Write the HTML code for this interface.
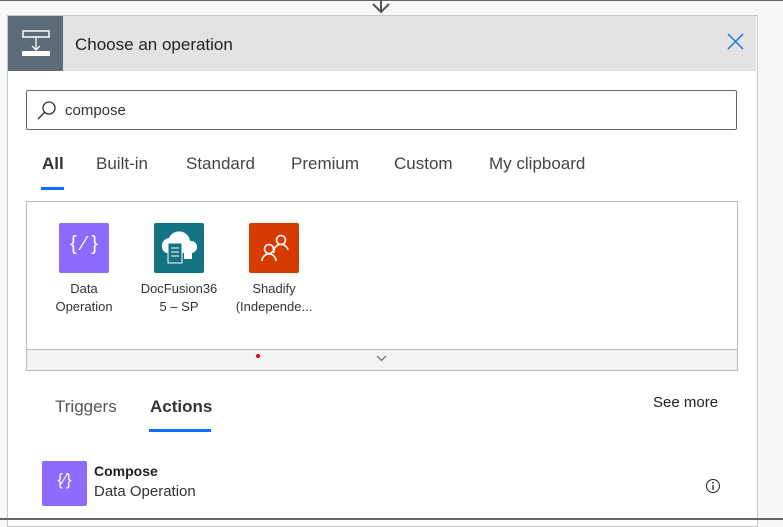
<!DOCTYPE html>
<html><head><style>
body{margin:0;width:783px;height:520px;background:#f8f8f8;font-family:"Liberation Sans",sans-serif;position:relative;overflow:hidden;color:#323130}
.a{position:absolute}
</style></head><body>
<div class="a" style="left:0;top:0;width:783px;height:1px;background:#666"></div>
<svg class="a" style="left:368px;top:0" width="26" height="14" viewBox="0 0 26 14"><path d="M13 0V12M5 4l8 8 8-8" stroke="#555" stroke-width="2" fill="none"/></svg>
<div class="a" style="left:7px;top:15px;width:749px;height:510px;background:#fff;border:1px solid #c8c8c8"></div>
<div class="a" style="left:8px;top:16px;width:748px;height:55px;background:#e3e3e3"></div>
<div class="a" style="left:8px;top:16px;width:55px;height:55px;background:#5e6b79"></div>
<svg class="a" style="left:20px;top:28px" width="32" height="32" viewBox="0 0 32 32"><rect x="3" y="3" width="26" height="6" fill="none" stroke="#fff" stroke-width="1.5"/><path d="M16 9v13M12 18l4 4 4-4" stroke="#fff" stroke-width="1.3" fill="none"/><rect x="2" y="23" width="28" height="5" fill="#fff"/></svg>
<div class="a" style="left:75px;top:35px;font-size:17px;color:#222">Choose an operation</div>
<svg class="a" style="left:727px;top:33px" width="17" height="17"><path d="M1 1L16 16M16 1L1 16" stroke="#1a73e8" stroke-width="1.5"/></svg>
<div class="a" style="left:26px;top:90px;width:709px;height:38px;border:1px solid #666;border-radius:2px"></div>
<svg class="a" style="left:36px;top:99px" width="22" height="22"><circle cx="13" cy="9" r="6" fill="none" stroke="#333" stroke-width="1.3"/><path d="M9 13L2 20" stroke="#333" stroke-width="1.4"/></svg>
<div class="a" style="left:65px;top:102px;font-size:15px;color:#333">compose</div>
<div class="a" style="left:42px;top:154px;font-size:17px;font-weight:bold;color:#333">All</div>
<div class="a" style="left:41px;top:187px;width:23px;height:3px;background:#0f6cff"></div>
<div class="a" style="left:96px;top:154px;font-size:17px;color:#444">Built-in</div>
<div class="a" style="left:186px;top:154px;font-size:17px;color:#444">Standard</div>
<div class="a" style="left:291px;top:154px;font-size:17px;color:#444">Premium</div>
<div class="a" style="left:394px;top:154px;font-size:17px;color:#444">Custom</div>
<div class="a" style="left:489px;top:154px;font-size:17px;color:#444">My clipboard</div>
<div class="a" style="left:26px;top:201px;width:710px;height:169px;border:1px solid #bbb;border-bottom:none"></div>
<div class="a" style="left:27px;top:349px;width:710px;height:20px;background:#f3f3f3;border-top:1px solid #bbb;border-bottom:1px solid #bbb"></div>
<div class="a" style="left:256px;top:354px;width:4px;height:4px;border-radius:50%;background:#e00"></div>
<svg class="a" style="left:376px;top:355px" width="11" height="7"><path d="M1 1l4.5 4.5L10 1" stroke="#555" fill="none"/></svg>
<div class="a" style="left:59px;top:223px;width:50px;height:50px;background:#8c6cff;border-radius:2px"></div>
<div class="a" style="left:59px;top:233px;width:50px;text-align:center;color:#fff;font-size:20px">{ ⁄ }</div>
<div class="a" style="left:154px;top:223px;width:50px;height:50px;background:#147383;border-radius:2px"></div>
<svg class="a" style="left:154px;top:223px" width="50" height="50"><path d="M12 30a8 8 0 0 1 3-15 11 11 0 0 1 21 3 6 6 0 0 1 2 12z" fill="#fff"/><rect x="14" y="20" width="14" height="20" fill="#147383" stroke="#fff"/><path d="M17 25h8M17 29h8M17 33h8" stroke="#fff"/><rect x="30" y="27" width="8" height="9" fill="#fff"/></svg>
<div class="a" style="left:249px;top:223px;width:50px;height:50px;background:#d83b01;border-radius:2px"></div>
<svg class="a" style="left:249px;top:223px" width="50" height="50"><circle cx="32" cy="17" r="4.5" fill="none" stroke="#fff" stroke-width="1.6"/><path d="M25 30a7 7 0 0 1 14-3" fill="none" stroke="#fff" stroke-width="1.6"/><circle cx="20" cy="26" r="4.5" fill="none" stroke="#fff" stroke-width="1.6"/><path d="M13 38a7 7 0 0 1 14 0" fill="none" stroke="#fff" stroke-width="1.6"/></svg>
<div class="a" style="left:34px;top:280px;width:100px;text-align:center;font-size:13px;line-height:18px;color:#333">Data<br>Operation</div>
<div class="a" style="left:129px;top:280px;width:100px;text-align:center;font-size:13px;line-height:18px;color:#333">DocFusion36<br>5 – SP</div>
<div class="a" style="left:224px;top:280px;width:100px;text-align:center;font-size:13px;line-height:18px;color:#333">Shadify<br>(Independe...</div>
<div class="a" style="left:55px;top:397px;font-size:17px;color:#555">Triggers</div>
<div class="a" style="left:150px;top:397px;font-size:17px;font-weight:bold;color:#333">Actions</div>
<div class="a" style="left:149px;top:429px;width:62px;height:3px;background:#0f6cff"></div>
<div class="a" style="left:653px;top:394px;font-size:15px;color:#222">See more</div>
<div class="a" style="left:42px;top:461px;width:45px;height:45px;background:#8c6cff;border-radius:2px"></div>
<div class="a" style="left:42px;top:470px;width:45px;text-align:center;color:#fff;font-size:17px">{⁄}</div>
<div class="a" style="left:94px;top:463px;font-size:14px;font-weight:bold;color:#222">Compose</div>
<div class="a" style="left:94px;top:483px;font-size:15px;color:#333">Data Operation</div>
<svg class="a" style="left:705px;top:478px" width="16" height="16"><circle cx="8" cy="8" r="6.5" fill="none" stroke="#222"/><path d="M8 7v5" stroke="#222" stroke-width="1.3"/><circle cx="8" cy="4.8" r=".9" fill="#222"/></svg>
<div class="a" style="left:0;top:518px;width:783px;height:2px;background:#666"></div>
</body></html>
